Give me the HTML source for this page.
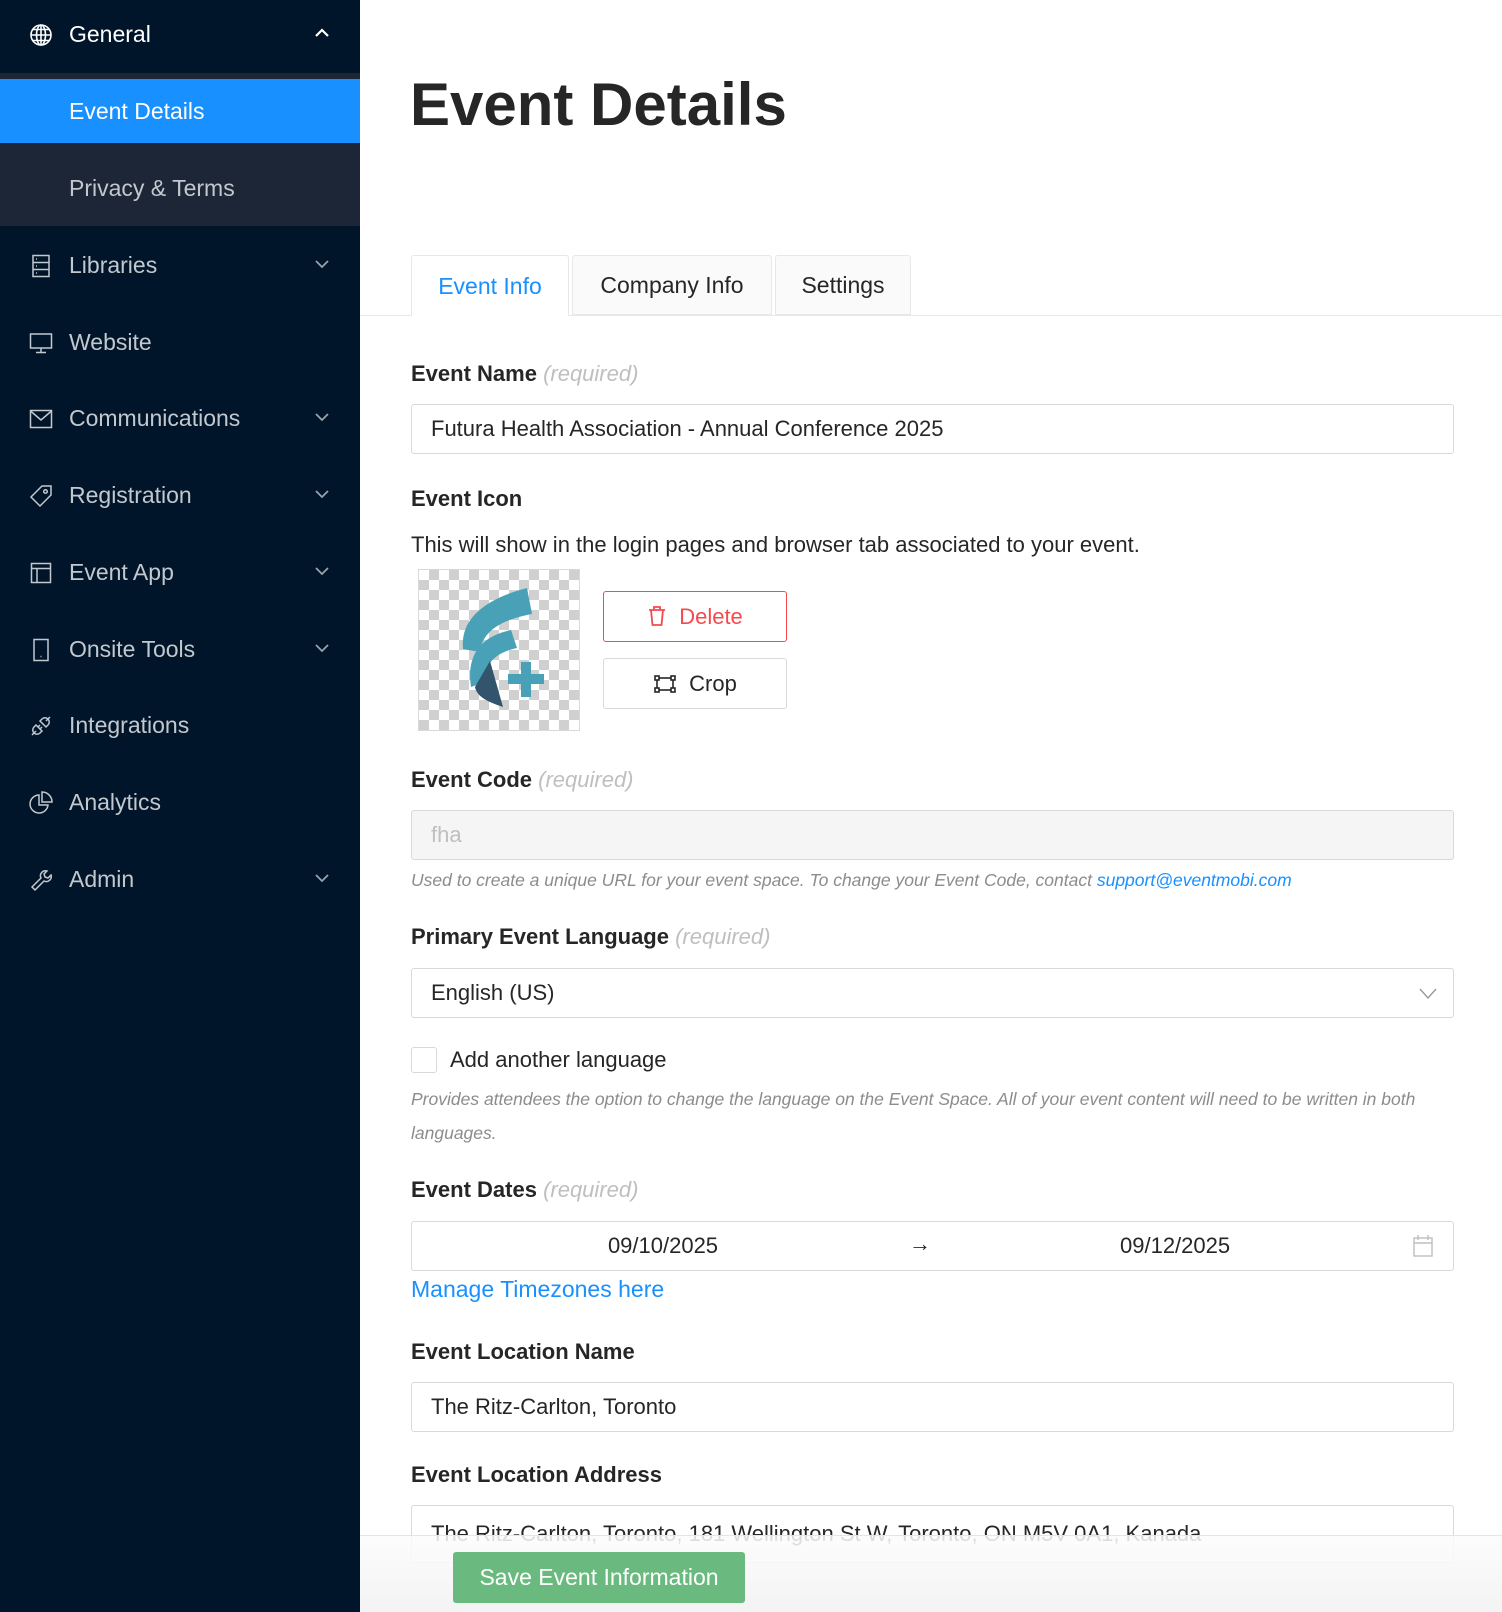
<!DOCTYPE html>
<html><head><meta charset="utf-8"><style>
*{margin:0;padding:0;box-sizing:border-box}
body{width:1502px;height:1612px;position:relative;overflow:hidden;background:#fff;font-family:"Liberation Sans",sans-serif;color:#262626}
.sb{position:absolute;left:0;top:0;width:360px;height:1612px;background:#001529}
.it{position:absolute;left:0;width:360px;height:40px;color:#c3c8cf;font-size:23px;line-height:40px}
.it span{position:absolute;left:69px}
.it svg.ic{position:absolute;left:29px;top:9px}
.it svg.ch{position:absolute;left:314px;top:13px}
.abs{position:absolute}
.lbl{position:absolute;left:411px;font-size:22px;font-weight:bold;color:#262626}
.lbl i{font-weight:normal;color:#bfbfbf}
.inp{position:absolute;left:411px;width:1043px;height:50px;border:1px solid #d9d9d9;border-radius:3px;font-size:22px;line-height:48px;padding-left:19px;color:#262626;background:#fff}
.help{position:absolute;left:411px;font-size:17.5px;font-style:italic;color:#8c8c8c}
</style></head><body>
<div class="sb">
 <div class="abs" style="left:0;top:73px;width:360px;height:6px;background:#1d2636"></div>
 <div class="abs" style="left:0;top:79px;width:360px;height:64px;background:#1890ff"></div>
 <div class="abs" style="left:0;top:143px;width:360px;height:83px;background:#1d2636"></div>
 <div class="it" style="top:14px;color:#fff"><svg class="ic" width="24" height="24" viewBox="0 0 24 24" fill="none" stroke="#fff" stroke-width="1.6"><circle cx="12" cy="12" r="10"/><ellipse cx="12" cy="12" rx="4.5" ry="10"/><path d="M2 12h20M4 6.5h16M4 17.5h16M12 2v20"/></svg><span>General</span><svg class="ch" width="16" height="12" viewBox="0 0 16 12" fill="none" stroke="#fff" stroke-width="2.2"><path d="M2 9l6-6 6 6"/></svg></div>
 <div class="it" style="top:91px;color:#fff"><span>Event Details</span></div>
 <div class="it" style="top:168px"><span>Privacy &amp; Terms</span></div>
 <div class="it" style="top:245px"><svg class="ic" width="24" height="24" viewBox="0 0 24 24" fill="none" stroke="#c3c8cf" stroke-width="1.5"><rect x="4" y="1.5" width="16" height="21"/><path d="M4 8.5h16M4 15.5h16M7 5h1M7 12h1M7 19h1"/></svg><span>Libraries</span><svg class="ch" width="16" height="12" viewBox="0 0 16 12" fill="none" stroke="#9aa2ad" stroke-width="1.8"><path d="M2 3l6 6 6-6"/></svg></div>
 <div class="it" style="top:322px"><svg class="ic" width="24" height="24" viewBox="0 0 24 24" fill="none" stroke="#c3c8cf" stroke-width="1.5"><rect x="1.5" y="3" width="21" height="14"/><path d="M12 17v4M7 21.5h10"/></svg><span>Website</span></div>
 <div class="it" style="top:398px"><svg class="ic" width="24" height="24" viewBox="0 0 24 24" fill="none" stroke="#c3c8cf" stroke-width="1.5"><rect x="1.5" y="3.5" width="21" height="17"/><path d="M1.5 4l10.5 9 10.5-9"/></svg><span>Communications</span><svg class="ch" width="16" height="12" viewBox="0 0 16 12" fill="none" stroke="#9aa2ad" stroke-width="1.8"><path d="M2 3l6 6 6-6"/></svg></div>
 <div class="it" style="top:475px"><svg class="ic" width="24" height="24" viewBox="0 0 24 24" fill="none" stroke="#c3c8cf" stroke-width="1.5"><path d="M13 2h9v9L11 22 2 13z"/><circle cx="16.5" cy="7.5" r="1.8"/></svg><span>Registration</span><svg class="ch" width="16" height="12" viewBox="0 0 16 12" fill="none" stroke="#9aa2ad" stroke-width="1.8"><path d="M2 3l6 6 6-6"/></svg></div>
 <div class="it" style="top:552px"><svg class="ic" width="24" height="24" viewBox="0 0 24 24" fill="none" stroke="#c3c8cf" stroke-width="1.5"><rect x="2.5" y="2.5" width="19" height="19"/><path d="M2.5 7.5h19M8 7.5v14"/></svg><span>Event App</span><svg class="ch" width="16" height="12" viewBox="0 0 16 12" fill="none" stroke="#9aa2ad" stroke-width="1.8"><path d="M2 3l6 6 6-6"/></svg></div>
 <div class="it" style="top:629px"><svg class="ic" width="24" height="24" viewBox="0 0 24 24" fill="none" stroke="#c3c8cf" stroke-width="1.5"><rect x="5" y="1.5" width="14" height="21"/><path d="M11.5 18.5h1"/></svg><span>Onsite Tools</span><svg class="ch" width="16" height="12" viewBox="0 0 16 12" fill="none" stroke="#9aa2ad" stroke-width="1.8"><path d="M2 3l6 6 6-6"/></svg></div>
 <div class="it" style="top:705px"><svg class="ic" width="24" height="24" viewBox="0 0 24 24" fill="none" stroke="#c3c8cf" stroke-width="1.5"><path d="M3 21l4-4M17 7l4-4M7 11l6 6-2 2a4 4 0 01-6-6zM17 13l-6-6 2-2a4 4 0 016 6zM9 13l2-2M11 15l2-2"/></svg><span>Integrations</span></div>
 <div class="it" style="top:782px"><svg class="ic" width="24" height="24" viewBox="0 0 24 24" fill="none" stroke="#c3c8cf" stroke-width="1.5"><path d="M10 4a9 9 0 109 10h-9z"/><path d="M13 1v10h10A10 10 0 0013 1z"/></svg><span>Analytics</span></div>
 <div class="it" style="top:859px"><svg class="ic" width="24" height="24" viewBox="0 0 24 24" fill="none" stroke="#c3c8cf" stroke-width="1.5"><path d="M3 19l9-9a5 5 0 016-7l-3 3 1 3 3 1 3-3a5 5 0 01-7 6l-9 9z"/></svg><span>Admin</span><svg class="ch" width="16" height="12" viewBox="0 0 16 12" fill="none" stroke="#9aa2ad" stroke-width="1.8"><path d="M2 3l6 6 6-6"/></svg></div>
</div>

<div class="abs" style="left:410px;top:70px;font-size:60px;font-weight:bold;color:#262626">Event Details</div>

<div class="abs" style="left:360px;top:315px;width:1142px;height:1px;background:#e8e8e8"></div>
<div class="abs" style="left:411px;top:255px;width:158px;height:61px;border:1px solid #e8e8e8;border-bottom:none;background:#fff;border-radius:3px 3px 0 0;color:#1890ff;font-size:23px;line-height:60px;text-align:center">Event Info</div>
<div class="abs" style="left:572px;top:255px;width:200px;height:60px;border:1px solid #e8e8e8;background:#fafafa;border-radius:3px 3px 0 0;font-size:23px;line-height:58px;text-align:center">Company Info</div>
<div class="abs" style="left:775px;top:255px;width:136px;height:60px;border:1px solid #e8e8e8;background:#fafafa;border-radius:3px 3px 0 0;font-size:23px;line-height:58px;text-align:center">Settings</div>

<div class="lbl" style="top:361px">Event Name <i>(required)</i></div>
<div class="inp" style="top:404px">Futura Health Association - Annual Conference 2025</div>

<div class="lbl" style="top:486px">Event Icon</div>
<div class="abs" style="left:411px;top:532px;font-size:22px">This will show in the login pages and browser tab associated to your event.</div>
<div class="abs" style="left:418px;top:569px;width:162px;height:162px;border:1px solid #d9d9d9;background-color:#fff;background-image:conic-gradient(#d0d0d0 25%,#fff 0 50%,#d0d0d0 0 75%,#fff 0);background-size:20px 20px">
 <svg width="160" height="160" viewBox="0 0 160 160">
  <path d="M108 18l5 26c-32 6-50 18-52 38l-17-3c-3-30 22-50 64-61z" fill="#48a1b6"/>
  <path d="M92 60l6 18c-20 4-33 15-32 34l-14 5c-5-33 11-51 40-57z" fill="#48a1b6"/>
  <path d="M56 117l15-26 13 46c-15-5-26-10-28-20z" fill="#33546d"/>
  <path d="M102 92h10v12h13v10h-13v13h-10v-13H89v-10h13z" fill="#48a1b6"/>
 </svg>
</div>
<div class="abs" style="left:603px;top:591px;width:184px;height:51px;border:1px solid #f5494d;border-radius:3px;color:#f5494d;font-size:22px;line-height:49px;text-align:center"><svg width="20" height="22" viewBox="0 0 20 22" fill="none" stroke="#f5494d" stroke-width="1.8" style="vertical-align:-3px;margin-right:12px"><path d="M2 5h16M7 5V2h6v3M4 5l1.5 15h9L16 5"/></svg>Delete</div>
<div class="abs" style="left:603px;top:658px;width:184px;height:51px;border:1px solid #d9d9d9;border-radius:3px;font-size:22px;line-height:49px;text-align:center"><svg width="24" height="20" viewBox="0 0 24 20" fill="none" stroke="#262626" stroke-width="1.6" style="vertical-align:-3px;margin-right:12px"><rect x="4" y="4" width="16" height="12"/><rect x="2" y="2" width="4" height="4" fill="#fff"/><rect x="18" y="2" width="4" height="4" fill="#fff"/><rect x="2" y="14" width="4" height="4" fill="#fff"/><rect x="18" y="14" width="4" height="4" fill="#fff"/></svg>Crop</div>

<div class="lbl" style="top:767px">Event Code <i>(required)</i></div>
<div class="inp" style="top:810px;background:#f5f5f5;color:#bfbfbf">fha</div>
<div class="help" style="top:870px">Used to create a unique URL for your event space. To change your Event Code, contact <span style="color:#1890ff">support@eventmobi.com</span></div>

<div class="lbl" style="top:924px">Primary Event Language <i>(required)</i></div>
<div class="inp" style="top:968px">English (US)<svg width="18" height="12" viewBox="0 0 18 12" fill="none" stroke="#999" stroke-width="1.4" style="position:absolute;right:16px;top:19px"><path d="M1 1l8 9 8-9"/></svg></div>

<div class="abs" style="left:411px;top:1047px;width:26px;height:26px;border:1px solid #d9d9d9;border-radius:3px"></div>
<div class="abs" style="left:450px;top:1047px;font-size:22px">Add another language</div>
<div class="help" style="top:1082px;line-height:34px;width:1060px">Provides attendees the option to change the language on the Event Space. All of your event content will need to be written in both languages.</div>

<div class="lbl" style="top:1177px">Event Dates <i>(required)</i></div>
<div class="inp" style="top:1221px;padding:0">
 <span class="abs" style="left:0;width:502px;text-align:center;top:0">09/10/2025</span>
 <span class="abs" style="left:497px;top:-2px">→</span>
 <span class="abs" style="left:708px;width:100px;text-align:center;top:0">09/12/2025</span>
 <svg width="20" height="22" viewBox="0 0 20 22" fill="none" stroke="#bfbfbf" stroke-width="1.4" style="position:absolute;right:20px;top:13px"><rect x="1" y="3" width="18" height="18"/><path d="M1 8h18M5 0v5M15 0v5"/></svg>
</div>
<div class="abs" style="left:411px;top:1276px;font-size:23px;color:#1890ff">Manage Timezones here</div>

<div class="lbl" style="top:1339px">Event Location Name</div>
<div class="inp" style="top:1382px">The Ritz-Carlton, Toronto</div>

<div class="lbl" style="top:1462px">Event Location Address</div>
<div class="inp" style="top:1505px;height:58px;padding-top:4px">The Ritz-Carlton, Toronto, 181 Wellington St W, Toronto, ON M5V 0A1, Kanada</div>

<div class="abs" style="left:360px;top:1535px;width:1142px;height:77px;background:linear-gradient(rgba(252,252,252,0.85),rgba(243,243,243,0.97));border-top:1px solid #e5e5e5"></div>
<div class="abs" style="left:453px;top:1552px;width:292px;height:51px;background:#6aba7f;border-radius:3px;color:#fff;font-size:23px;line-height:51px;text-align:center">Save Event Information</div>
</body></html>
